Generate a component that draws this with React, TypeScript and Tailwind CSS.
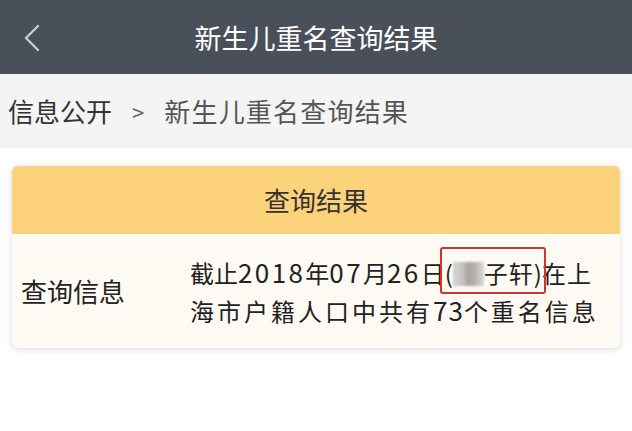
import React from "react"

const font = { fontFamily: '"Noto Sans CJK SC", "Noto Sans", sans-serif' }

export default function App() {
  return (
    <div className="min-h-[431px] w-[632px] bg-white" style={font}>
      {/* Top bar */}
      <header className="relative flex h-[74px] items-center justify-center bg-[#49505a]">
        <svg className="absolute left-[22px] top-[24px]" width="20" height="28" viewBox="0 0 20 28">
          <path d="M16 2 L4 14 L16 26" fill="none" stroke="#c9ccd1" strokeWidth="2.4" strokeLinecap="round" strokeLinejoin="round" />
        </svg>
        <h1 className="text-[27px] leading-none text-white">新生儿重名查询结果</h1>
      </header>

      {/* Breadcrumb */}
      <nav className="flex h-[74px] items-center bg-[#f4f4f4] pl-[8px] text-[26px] leading-none">
        <span className="text-[#333]">信息公开</span>
        <span className="ml-[20px] mr-[20px] text-[22px] text-[#666]">&gt;</span>
        <span className="tracking-[1.2px] text-[#555]">新生儿重名查询结果</span>
      </nav>

      {/* Result card */}
      <section className="mx-[12px] mt-[18px] overflow-hidden rounded-[6px] shadow-[0_1px_6px_rgba(0,0,0,0.16)]">
        <div className="flex h-[68px] items-center justify-center bg-[#fcd27b] text-[26px] leading-none text-[#333]">
          查询结果
        </div>
        <div className="flex h-[114px] items-center bg-[#fdf9f3]">
          <div className="w-[178px] pl-[9px] text-[26px] leading-none text-[#222]">查询信息</div>
          <div className="w-[414px] text-[24px] leading-[37px] text-[#222]">
            <div className="whitespace-nowrap">
              截止<span className="text-[26px] tracking-[2.4px]">2018</span>年<span className="text-[26px] tracking-[2.4px]">07</span>月
              <span className="text-[26px] tracking-[2.4px]">26</span>日
              <span className="relative">
                (
                <span className="inline-block h-[24px] w-[31px] translate-y-[3px] bg-[linear-gradient(90deg,#d6d4d1_0%,#c6c4c1_30%,#a8a6a3_48%,#b3b1ae_70%,#dddbd8_100%)] blur-[1px]" />
                <span className="tracking-[1px]">子轩</span>)
                <span className="absolute -bottom-[4px] -left-[5px] -right-[4px] -top-[8px] rounded-[3px] border-2 border-[#d4322c]" />
              </span>
              <span className="tracking-[1px]">在上</span>
            </div>
            <div className="whitespace-nowrap tracking-[3px]">
              海市户籍人口中共有<span className="text-[26px] tracking-[1px]">73</span>个重名信息
            </div>
          </div>
        </div>
      </section>
    </div>
  )
}
